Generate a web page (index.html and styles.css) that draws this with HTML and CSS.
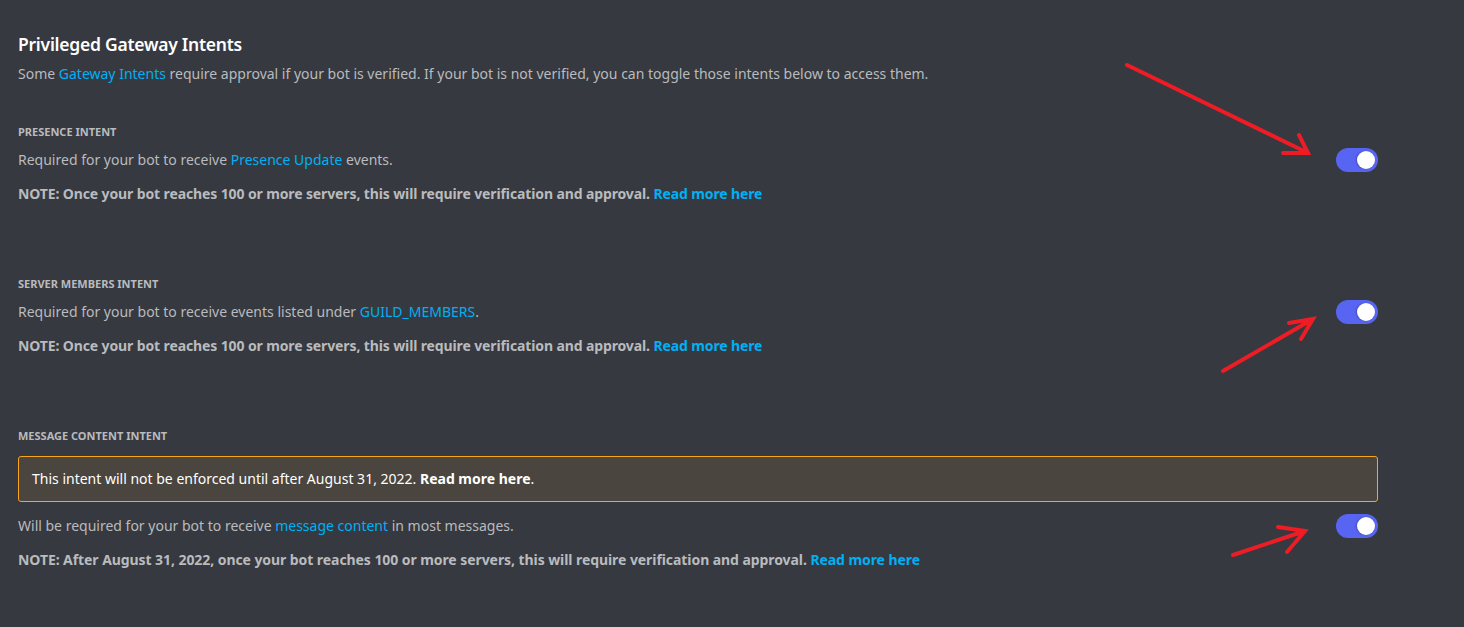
FILE: index.html
```html
<!DOCTYPE html>
<html>
<head>
<meta charset="utf-8">
<link rel="stylesheet" href="styles.css">
</head>
<body>
<main class="page">
  <h2 class="title">Privileged Gateway Intents</h2>
  <p class="intro">Some <a class="link">Gateway Intents</a> require approval if your bot is verified. If your bot is not verified, you can toggle those intents below to access them.</p>

  <section class="intent">
    <h3 class="label">Presence Intent</h3>
    <div class="row">
      <p class="desc">Required for your bot to receive <a class="link">Presence Update</a> events.</p>
      <span class="toggle"><span class="knob"></span></span>
    </div>
    <p class="note">NOTE: Once your bot reaches 100 or more servers, this will require verification and approval. <a class="link">Read more here</a></p>
  </section>

  <section class="intent">
    <h3 class="label">Server Members Intent</h3>
    <div class="row">
      <p class="desc">Required for your bot to receive events listed under <a class="link">GUILD_MEMBERS</a>.</p>
      <span class="toggle"><span class="knob"></span></span>
    </div>
    <p class="note">NOTE: Once your bot reaches 100 or more servers, this will require verification and approval. <a class="link">Read more here</a></p>
  </section>

  <section class="intent">
    <h3 class="label">Message Content Intent</h3>
    <div class="warning">This intent will not be enforced until after August 31, 2022. <strong>Read more here</strong>.</div>
    <div class="row row-after-box">
      <p class="desc">Will be required for your bot to receive <a class="link">message content</a> in most messages.</p>
      <span class="toggle"><span class="knob"></span></span>
    </div>
    <p class="note note-long">NOTE: After August 31, 2022, once your bot reaches 100 or more servers, this will require verification and approval. <a class="link">Read more here</a></p>
  </section>
</main>

<svg class="arrows" width="1464" height="627" viewBox="0 0 1464 627">
  <g stroke="#ee1c25" stroke-width="4" stroke-linecap="round" fill="none">
    <path d="M1127 65 L1308 153 M1299 135 L1308 153 L1283 153"/>
    <path d="M1223 371 L1313 319 M1289 323 L1313 319 L1301 339"/>
    <path d="M1233 555 L1305 531 M1278 527 L1305 531 L1287 552"/>
  </g>
</svg>
</body>
</html>
```

FILE: styles.css
```css
html, body {
  margin: 0;
  padding: 0;
  background: #36393f;
  height: 100%;
}

body {
  font-family: "Noto Sans", "Open Sans", sans-serif;
  color: #b9bbbe;
  overflow: hidden;
}

.page {
  width: 1360px;
  padding: 32px 0 0 18px;
}

.title {
  margin: 0;
  font-size: 17.5px;
  letter-spacing: -0.25px;
  line-height: 24px;
  font-weight: 600;
  color: #ffffff;
}

.intro {
  margin: 8px 0 0;
  font-size: 14px;
  line-height: 20px;
}

.link {
  color: #00b0f4;
  text-decoration: none;
}

.intent {
  margin-top: 72px;
}

.intent:first-of-type {
  margin-top: 40px;
}

.label {
  margin: 0;
  font-size: 11px;
  line-height: 16px;
  font-weight: 700;
  text-transform: uppercase;
  color: #b9bbbe;
}

.row {
  display: flex;
  justify-content: space-between;
  align-items: center;
  height: 20px;
  margin-top: 10px;
}

.row-after-box {
  margin-top: 14px;
}

.desc {
  margin: 0;
  font-size: 14px;
  line-height: 20px;
}

.note {
  margin: 14px 0 0;
  font-size: 14px;
  line-height: 20px;
  font-weight: 700;
  letter-spacing: -0.12px;
}

.note-long {
  letter-spacing: -0.07px;
}

.toggle {
  flex: none;
  width: 42px;
  height: 24px;
  border-radius: 12px;
  background: #5865f2;
  display: flex;
  align-items: center;
  justify-content: flex-end;
  padding-right: 3px;
  box-sizing: border-box;
}

.knob {
  width: 18px;
  height: 18px;
  border-radius: 50%;
  background: #ffffff;
  box-shadow: -1px 0 2px rgba(0, 0, 0, 0.25);
}

.warning {
  margin-top: 12px;
  height: 46px;
  box-sizing: border-box;
  border: 1px solid #faa61a;
  border-radius: 3px;
  background: #4a453e;
  color: #ffffff;
  font-size: 14px;
  line-height: 20px;
  padding: 12px 13px;
}

.warning strong {
  font-weight: 700;
}

.arrows {
  position: absolute;
  left: 0;
  top: 0;
  pointer-events: none;
}
```
